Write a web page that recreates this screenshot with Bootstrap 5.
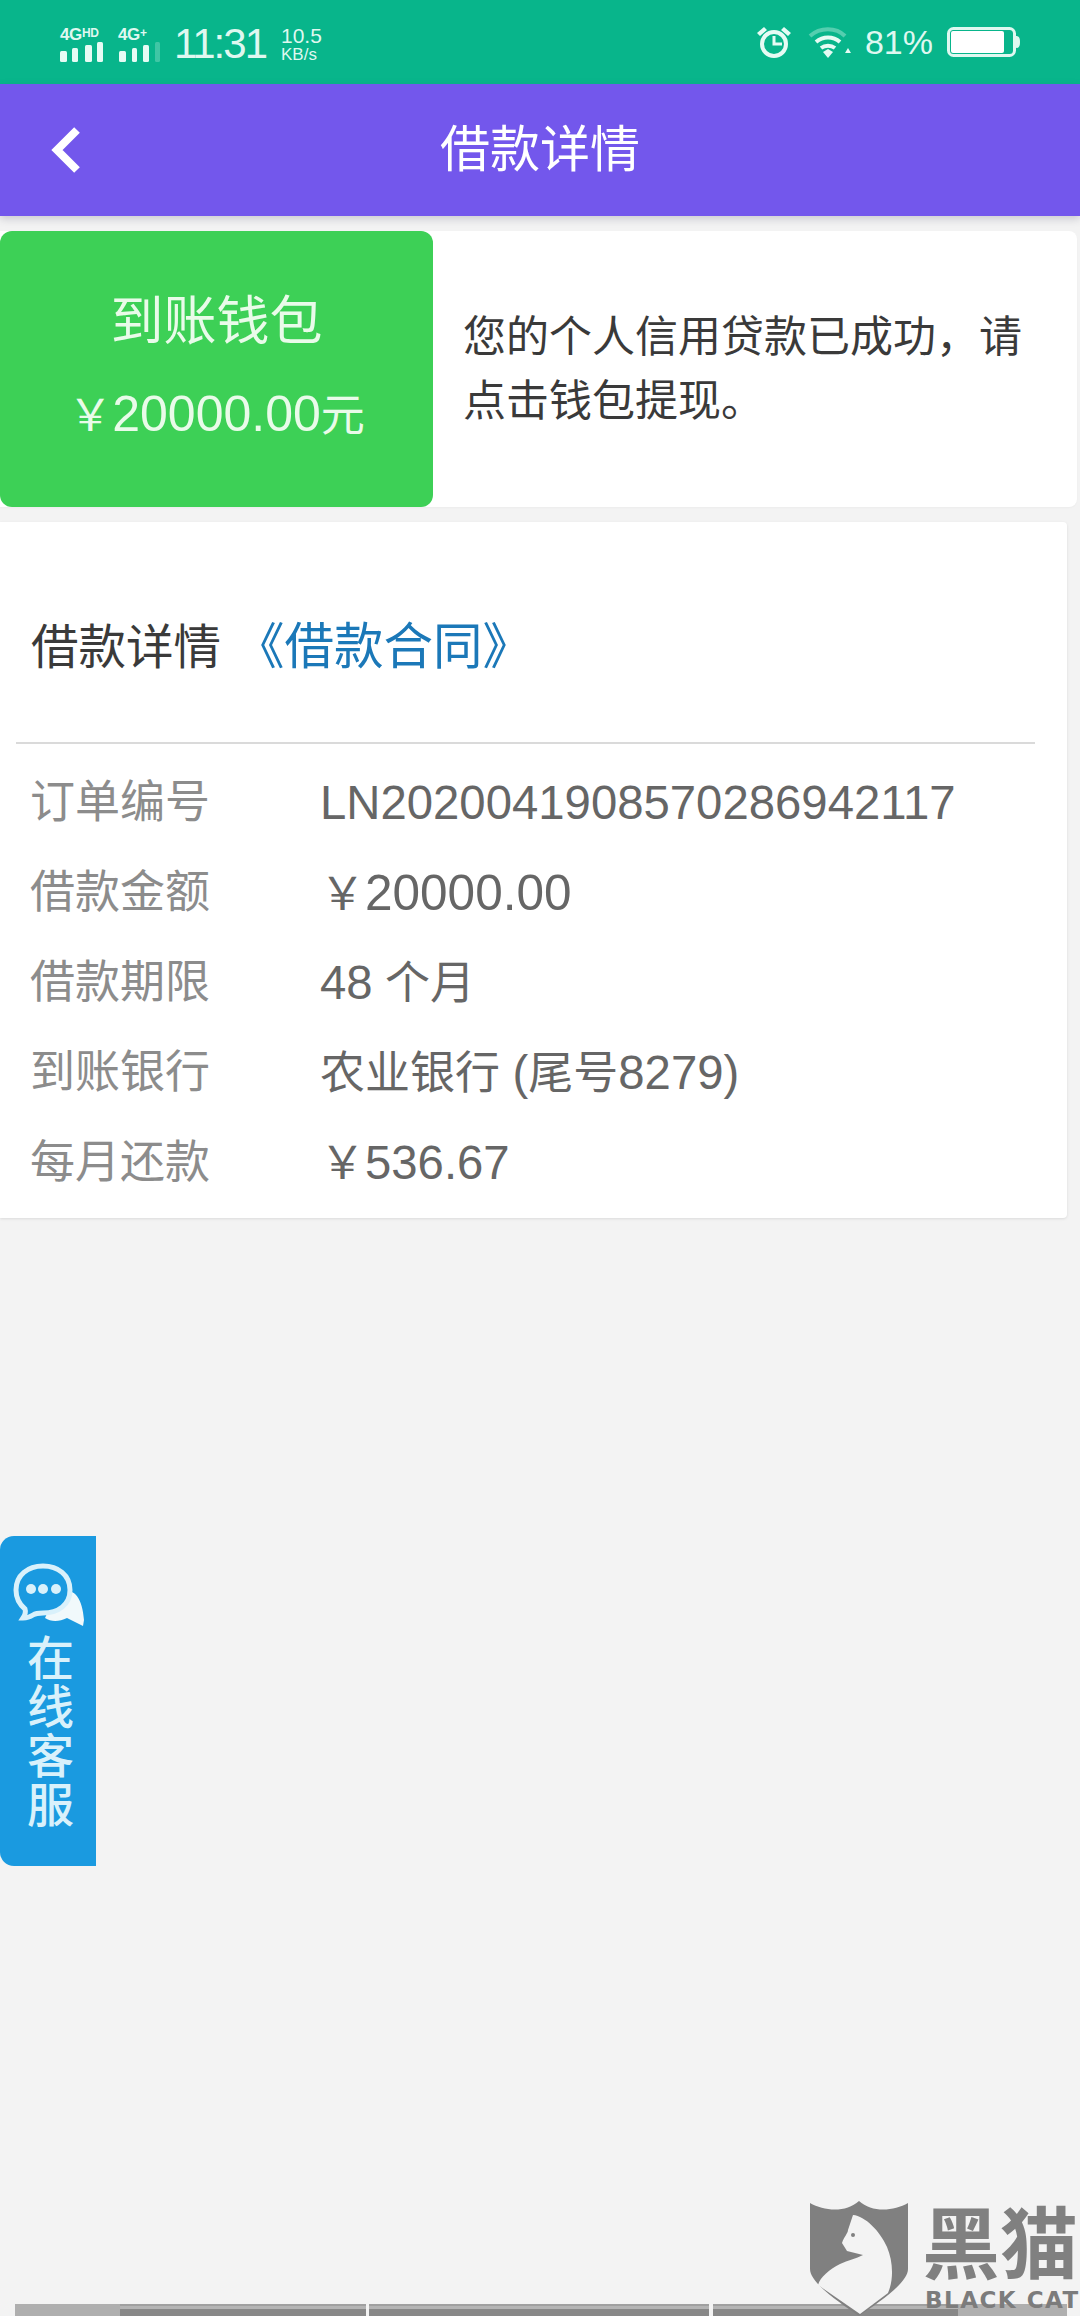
<!DOCTYPE html>
<html lang="zh-CN">
<head>
  <meta charset="UTF-8">
  <title>借款详情</title>
  <meta name="viewport" content="width=device-width, initial-scale=1">
  <link rel="stylesheet" href="https://cdn.jsdelivr.net/npm/bootstrap@5.3.0/dist/css/bootstrap.min.css">
  <style>
    html, body {
      margin: 0;
      height: 100%;
      background-color: #f3f3f3;
      font-family: "Liberation Sans", "Noto Sans CJK SC", sans-serif;
    }
    .screen { position: relative; width: 1080px; height: 2316px; overflow: hidden; }
    .latin { font-size: 47.3px; }
    .latin-lg { font-size: 49.5px; }

    /* status bar */
    .status-bar { height: 84px; padding: 0 60px; background-color: #08b58b; color: #dff8f0; }
    .net-tag { font-size: 17px; font-weight: 700; line-height: 15px; letter-spacing: -.4px; white-space: nowrap; }
    .net-tag small { font-size: 12px; vertical-align: 3px; }
    .net-group { width: 43px; padding-top: 4px; }
    .net-group + .net-group { margin-left: 15px; }
    .status-time { font-size: 42px; line-height: 42px; letter-spacing: -2px; margin-left: 13px; padding-top: 4px; }
    .speed { margin-left: 15px; padding-top: 5px; }
    .speed-num { font-size: 21px; line-height: 21px; }
    .speed-unit { font-size: 17px; line-height: 18px; }
    .status-pct { font-size: 34px; line-height: 34px; margin: 0 14px 0 13px; }

    /* title bar */
    .title-bar { height: 132px; background-color: #7357ec; color: #fff; font-size: 50px; box-shadow: 0 3px 8px rgba(60, 60, 90, .22); }
    .back-arrow { left: 50px; top: 42px; }

    /* cards */
    .notice-card { height: 276px; margin: 15px 3px 0 0; background-color: #fff; border: 0; border-radius: 0 8px 8px 0; box-shadow: 0 1px 2px rgba(0, 0, 0, .03); }
    .wallet-box { width: 433px; background-color: #3dd056; color: #e9fbe9; border-radius: 12px; }
    .wallet-title { font-size: 53px; line-height: 60px; margin-bottom: 32px; }
    .wallet-amount { font-size: 44px; line-height: 60px; }
    .wallet-amount .latin { font-size: 50px; }
    .notice-text { padding: 0 30px; font-size: 43px; line-height: 64px; color: #3a3a3a; }

    .detail-card { height: 696px; width: 1067px; margin-top: 15px; background-color: #fff; border: 0; border-radius: 0 4px 4px 0; box-shadow: 0 1px 3px rgba(0, 0, 0, .1); }
    .detail-head { height: 220px; padding: 95px 0 0 31px; font-size: 47.5px; line-height: 60px; color: #3a3a3a; }
    .detail-head a { margin-left: 14px; font-size: 49.5px; color: #1b78b8; text-decoration: none; }
    .card > .detail-line { margin: 0 32px 14px 16px; border-top: 2px solid #dadada; opacity: 1; }
    .detail-row { height: 90px; padding-left: 30px; font-size: 45px; color: #666; }
    .detail-label { width: 290px; color: #8c8c8c; }

    /* floating service tab */
    .service-tab { position: absolute; left: 0; top: 1536px; width: 96px; height: 330px; background-color: #1a9ae0; border-radius: 14px 0 0 14px; color: #d9f1fb; }
    .service-tab svg { display: block; margin: 24px 0 0 12px; }
    .service-text { writing-mode: vertical-rl; text-orientation: upright; font-size: 47px; line-height: 47px; letter-spacing: 2px; font-weight: 500; margin: -2px 0 0 23px; }

    /* bottom bar */
    .nav-strip { height: 12px; padding-left: 15px; }
    .strip-first { width: 105px; background-color: #afafaf; }
    .strip-last { width: 109px; background-color: #afafaf; }
    .strip-seg { background: linear-gradient(#a0a0a0 0 2px, #b4b4b4 2px 5px, #888 5px); }
    .strip-a { width: 246px; margin-right: 3px; }
    .strip-b { width: 340px; margin-right: 4px; }
    .strip-c { width: 245px; }

    /* watermark */
    .wm-shield { position: absolute; left: 810px; top: 2201px; }
    .wm-name { position: absolute; left: 922px; top: 2201px; font-size: 78px; line-height: 90px; font-weight: 700; color: #808080; white-space: nowrap; }
    .wm-latin { position: absolute; left: 925px; top: 2288px; font-family: "DejaVu Sans", sans-serif; font-size: 23px; line-height: 24px; font-weight: 700; letter-spacing: 1.5px; color: #7c7c7c; white-space: nowrap; }
  </style>
</head>
<body>
  <div class="screen d-flex flex-column">

    <!-- status bar -->
    <div class="status-bar d-flex justify-content-between align-items-center flex-shrink-0">
      <div class="d-flex align-items-center">
        <div class="net-group">
          <div class="net-tag">4G<small>HD</small></div>
          <svg width="43" height="20" viewBox="0 0 43 20" class="d-block" fill="#e6fbf4">
            <rect x="0" y="9" width="7" height="11" rx="1.5"/><rect x="12" y="6" width="6" height="14" rx="1.5"/><rect x="25" y="3" width="7" height="17" rx="1.5"/><rect x="37" y="0" width="6" height="20" rx="1.5"/>
          </svg>
        </div>
        <div class="net-group">
          <div class="net-tag">4G<small>+</small></div>
          <svg width="43" height="20" viewBox="0 0 43 20" class="d-block" fill="#e6fbf4">
            <rect x="1" y="9" width="7" height="11" rx="1.5"/><rect x="14" y="6" width="5" height="14" rx="1.5"/><rect x="25" y="3" width="6" height="17" rx="1.5"/><rect x="37" y="0" width="5" height="20" rx="1.5" opacity=".25"/>
          </svg>
        </div>
        <div class="status-time">11:31</div>
        <div class="speed">
          <div class="speed-num">10.5</div>
          <div class="speed-unit">KB/s</div>
        </div>
      </div>
      <div class="d-flex align-items-center">
        <svg width="36" height="34" viewBox="0 0 36 34" fill="none" stroke="#e6fbf4" class="me-3">
          <circle cx="18" cy="19" r="12" stroke-width="4"/>
          <path d="M18 11v8h8" stroke-width="3"/>
          <path d="M1 8l7-6 3 3-7 6zM35 8l-7-6-3 3 7 6z" fill="#e6fbf4" stroke="none"/>
        </svg>
        <svg width="44" height="32" viewBox="0 0 44 32" fill="none" stroke="#e6fbf4" stroke-width="4">
          <path d="M2 10C12 1 28 1 37 10" opacity=".35"/>
          <path d="M8 16c7-6 17-6 24 0"/>
          <path d="M13 22c4-3 10-3 14 0"/>
          <path d="M15 26l5-3 5 3-5 6z" fill="#e6fbf4" stroke="none"/>
          <path d="M37 27l3-5 3 5z" fill="#e6fbf4" stroke="none"/>
        </svg>
        <div class="status-pct">81%</div>
        <svg width="73" height="30" viewBox="0 0 73 30" fill="none">
          <rect x="1.5" y="1.5" width="66" height="27" rx="5" stroke="#dff8f0" stroke-width="3"/>
          <rect x="4" y="4" width="53" height="22" rx="2" fill="#fff"/>
          <path d="M69 9c3 0 4 2 4 6s-1 6-4 6z" fill="#dff8f0"/>
        </svg>
      </div>
    </div>

    <!-- title bar -->
    <div class="title-bar position-relative d-flex justify-content-center align-items-center flex-shrink-0">
      <svg class="back-arrow position-absolute" width="34" height="50" viewBox="0 0 34 50" fill="none" stroke="#fff" stroke-width="8">
        <path d="M27 4L7 24l20 20"/>
      </svg>
      <span>借款详情</span>
    </div>

    <!-- wallet notice -->
    <div class="card notice-card flex-row align-items-stretch flex-shrink-0">
      <div class="wallet-box d-flex flex-column justify-content-center align-items-center flex-shrink-0">
        <div class="wallet-title">到账钱包</div>
        <div class="wallet-amount">￥<span class="latin">20000.00</span>元</div>
      </div>
      <div class="notice-text d-flex align-items-center">您的个人信用贷款已成功，请点击钱包提现。</div>
    </div>

    <!-- loan details -->
    <div class="card detail-card flex-shrink-0">
      <div class="detail-head">借款详情<a href="#">《借款合同》</a></div>
      <hr class="detail-line mt-0">
      <div class="detail-row d-flex align-items-center"><div class="detail-label">订单编号</div><div class="latin">LN2020041908570286942117</div></div>
      <div class="detail-row d-flex align-items-center"><div class="detail-label">借款金额</div><div>￥<span class="latin-lg">20000.00</span></div></div>
      <div class="detail-row d-flex align-items-center"><div class="detail-label">借款期限</div><div><span class="latin">48</span> 个月</div></div>
      <div class="detail-row d-flex align-items-center"><div class="detail-label">到账银行</div><div>农业银行 <span class="latin">(</span>尾号<span class="latin">8279)</span></div></div>
      <div class="detail-row d-flex align-items-center"><div class="detail-label">每月还款</div><div>￥<span class="latin">536.67</span></div></div>
    </div>

    <div class="flex-grow-1"></div>

    <!-- bottom strip -->
    <div class="nav-strip d-flex flex-shrink-0">
      <div class="strip-first"></div>
      <div class="strip-seg strip-a"></div>
      <div class="strip-seg strip-b"></div>
      <div class="strip-seg strip-c"></div>
      <div class="strip-last"></div>
    </div>

    <!-- online service tab -->
    <div class="service-tab">
      <svg width="76" height="76" viewBox="0 0 76 76">
        <path d="M46 30c16-2 24 6 26 30l-1 6-16-8c-8 4-16 4-22 0z" fill="#f1f9fb"/>
        <path d="M31 6c15 0 27 9 27 24S46 53 31 53c-4 0-7 0-10 2-3 2-6 3-10 3 2-3 3-6 2-9C7 44 4 37 4 30 4 15 16 6 31 6z" fill="#1a9ae0" stroke="#d9f1fb" stroke-width="5"/>
        <circle cx="19" cy="29" r="5" fill="#d9f1fb"/><circle cx="31" cy="29" r="5" fill="#d9f1fb"/><circle cx="44" cy="29" r="5" fill="#d9f1fb"/>
      </svg>
      <div class="service-text">在线客服</div>
    </div>

    <!-- watermark -->
    <svg class="wm-shield" width="98" height="115" viewBox="0 0 98 115">
      <path d="M0 2C14 10 36 12 49 0c13 12 35 10 49 2v66c0 14-30 34-49 47C30 102 0 82 0 68z" fill="#808080"/>
      <path d="M43 14C55 15 70 30 77 46C83 60 84 78 78 92L50 113L8 84C10 76 20 68 30 63C38 59 46 58 53 54L37 50L32 42C34 36 38 32 38 29z" fill="#f3f3f3"/>
      <circle cx="43" cy="34" r="2" fill="#808080"/>
    </svg>
    <div class="wm-name">黑猫</div>
    <div class="wm-latin">BLACK CAT</div>

  </div>

  <script src="https://cdn.jsdelivr.net/npm/bootstrap@5.3.0/dist/js/bootstrap.bundle.min.js"></script>
</body>
</html>
